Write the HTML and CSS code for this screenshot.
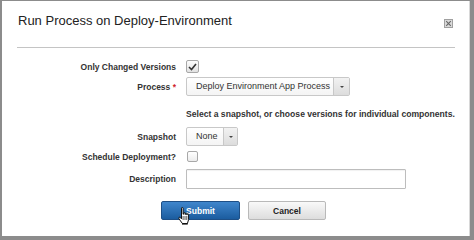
FILE: index.html
```html
<!DOCTYPE html>
<html>
<head>
<meta charset="utf-8">
<link rel="stylesheet" href="styles.css">
</head>
<body>
<div class="dialog">
  <div class="header">
    <h1 class="title">Run Process on Deploy-Environment</h1>
    <span class="close" title="Close"><svg width="9" height="9" viewBox="0 0 9 9"><rect x="0.5" y="0.5" width="8" height="8" fill="#dadada" stroke="#a0a0a0"/><path d="M2.2 2.2L6.8 6.8M6.8 2.2L2.2 6.8" stroke="#666" stroke-width="1.1"/></svg></span>
  </div>
  <div class="sep"></div>
  <form class="form">
    <div class="row r-only">
      <label class="lbl">Only Changed Versions</label>
      <div class="ctl"><span class="cb checked"><svg width="9" height="8" viewBox="0 0 9 8"><path d="M1 4L3.5 6.5L8 1" fill="none" stroke="#333" stroke-width="1.6"/></svg></span></div>
    </div>
    <div class="row r-proc">
      <label class="lbl">Process <span class="req">*</span></label>
      <div class="ctl"><div class="select sel-proc"><span class="sel-text">Deploy Environment App Process</span><span class="sel-btn"><i class="tri"></i></span></div></div>
    </div>
    <div class="row r-help">
      <span></span>
      <div class="help">Select a snapshot, or choose versions for individual components.</div>
    </div>
    <div class="row r-snap">
      <label class="lbl">Snapshot</label>
      <div class="ctl"><div class="select sel-snap"><span class="sel-text">None</span><span class="sel-btn"><i class="tri"></i></span></div></div>
    </div>
    <div class="row r-sched">
      <label class="lbl">Schedule Deployment?</label>
      <div class="ctl"><span class="cb small"></span></div>
    </div>
    <div class="row r-desc">
      <label class="lbl">Description</label>
      <div class="ctl"><input class="input" type="text"></div>
    </div>
    <div class="buttons">
      <button type="button" class="btn primary">Submit</button>
      <button type="button" class="btn">Cancel</button>
      <svg class="cursor" width="15" height="18" viewBox="0 0 15 18"><path d="M4.5 1.2Q4.5 0.5 5.3 0.5Q6.1 0.5 6.1 1.2V7.2H6.6V6.2Q6.6 5.6 7.3 5.6Q8 5.6 8 6.2V7.4H8.4V6.7Q8.4 6.1 9.1 6.1Q9.8 6.1 9.8 6.7V7.8H10.2V7.3Q10.2 6.8 10.9 6.8Q11.6 6.8 11.6 7.4V12.6L10.4 16.5H5.4L2.2 12.1Q1.4 11 2.1 10.4Q2.8 9.9 3.6 10.8L4.5 11.8Z" fill="#fff" stroke="#111" stroke-width="1"/><path d="M6.1 13V9M8 13V9M9.8 13V9" stroke="#111" stroke-width="0.7"/><rect x="5" y="16.2" width="5.7" height="1.4" fill="#111"/></svg>
    </div>
  </form>
</div>
</body>
</html>
```
FILE: styles.css
```css
html, body {
  margin: 0;
  padding: 0;
}
body {
  width: 474px;
  height: 240px;
  background: #8c8c8c;
  font-family: "Liberation Sans", Arial, sans-serif;
  overflow: hidden;
}
.dialog {
  margin: 1px 4px 0 2px;
  height: 235px;
  background: #fff;
  box-sizing: border-box;
  padding: 11px 14px 0 15px;
  border-right: 1px solid #d8d8d8;
}
.header {
  display: flex;
  align-items: flex-start;
  justify-content: space-between;
  padding-left: 1px;
}
.title {
  margin: 0;
  font-size: 13px;
  line-height: 17px;
  font-weight: normal;
  color: #222;
}
.close {
  display: block;
  margin: 7px 2px 0 0;
  line-height: 0;
}
.sep {
  height: 1px;
  background: #c4c4c4;
  margin-top: 18px;
}
.form {
  margin: 0;
  padding-left: 1px;
}
.row {
  display: grid;
  grid-template-columns: 158px 1fr;
  column-gap: 10px;
  align-items: center;
}
.lbl {
  text-align: right;
  font-size: 8.5px;
  font-weight: bold;
  color: #333;
  white-space: nowrap;
}
.req { color: #d0242b; }
.ctl { display: flex; align-items: center; line-height: 0; }
.r-only { margin-top: 12px; height: 13px; }
.r-proc { margin-top: 4px; }
.r-help { margin-top: 13px; }
.r-snap { margin-top: 8px; }
.r-sched { margin-top: 5px; height: 11px; }
.r-desc { margin-top: 7px; }
.cb {
  display: inline-flex;
  align-items: center;
  justify-content: center;
  box-sizing: border-box;
  width: 13px;
  height: 13px;
  border: 1px solid #a8a8a8;
  border-radius: 2px;
  background: linear-gradient(#fdfdfd, #e2e2e2);
}
.cb.small {
  width: 11px;
  height: 11px;
  margin-left: 1px;
  background: linear-gradient(#fff, #ececec);
}
.select {
  display: flex;
  box-sizing: border-box;
  height: 19px;
  border: 1px solid #c8c8c8;
  border-radius: 2px;
  background: linear-gradient(#fff, #f4f4f4);
  line-height: 17px;
}
.sel-proc { width: 164px; }
.sel-snap { width: 52px; }
.sel-text {
  flex: 1;
  font-size: 9px;
  color: #333;
  padding-left: 9px;
  white-space: nowrap;
}
.sel-btn {
  display: flex;
  align-items: center;
  justify-content: center;
  width: 15px;
  border-left: 1px solid #c8c8c8;
  background: linear-gradient(#f2f2f2, #dcdcdc);
}
.sel-snap .sel-btn { width: 13px; }
.tri {
  display: block;
  width: 0;
  height: 0;
  border-left: 2px solid transparent;
  border-right: 2px solid transparent;
  border-top: 2px solid #444;
}
.help {
  font-size: 8.6px;
  font-weight: bold;
  color: #333;
  line-height: 10px;
  white-space: nowrap;
}
.input {
  box-sizing: border-box;
  width: 220px;
  height: 20px;
  margin: 0;
  border: 1px solid #bdbdbd;
  border-radius: 1px;
  box-shadow: inset 0 1px 1px rgba(0,0,0,0.06);
  background: #fff;
  padding: 0 4px;
}
.buttons {
  position: relative;
  display: flex;
  gap: 8px;
  margin-top: 12px;
  padding-left: 143px;
}
.btn {
  box-sizing: border-box;
  width: 78px;
  height: 19px;
  margin: 0;
  padding: 0;
  border: 1px solid #b9b9b9;
  border-radius: 2px;
  background: linear-gradient(#f9f9f9, #dddddd);
  font-family: "Liberation Sans", Arial, sans-serif;
  font-size: 8.5px;
  font-weight: bold;
  color: #222;
}
.btn.primary {
  width: 79px;
  border-color: #1e4f86;
  background: linear-gradient(#3f86cc, #1b5c9f);
  color: #fff;
}
.cursor {
  position: absolute;
  left: 159px;
  top: 6px;
}
```
